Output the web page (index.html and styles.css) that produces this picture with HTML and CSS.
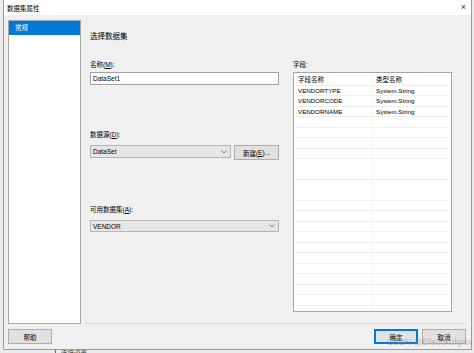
FILE: index.html
```html
<!DOCTYPE html>
<html lang="zh-CN">
<head>
    <meta charset="UTF-8">
    <title>数据集属性</title>
    <link rel="stylesheet" href="styles.css">
</head>
<body>
    <div class="window">
        <!-- Title bar -->
        <div class="titlebar">
            <span class="title">数据集属性</span>
            <span class="close">×</span>
        </div>

        <div class="content">
            <!-- Page list -->
            <div class="nav">
                <div class="nav-item selected">常规</div>
            </div>

            <!-- General page -->
            <div class="main">
                <div class="heading">选择数据集</div>
                <div class="columns">
                    <div class="left-col">
                        <div class="label">名称(<u>M</u>):</div>
                        <div class="textbox">DataSet1</div>

                        <div class="label gap">数据源(<u>D</u>):</div>
                        <div class="row">
                            <div class="combo short">
                                <span>DataSet</span>
                                <svg class="chevron" width="6" height="4" viewBox="0 0 6 4"><polyline points="0.5,0.5 3,3 5.5,0.5" fill="none" stroke="#606060" stroke-width="0.8"/></svg>
                            </div>
                            <div class="btn new">新建(<u>E</u>)...</div>
                        </div>

                        <div class="label gap">可用数据集(<u>A</u>):</div>
                        <div class="combo">
                            <span>VENDOR</span>
                            <svg class="chevron" width="6" height="4" viewBox="0 0 6 4"><polyline points="0.5,0.5 3,3 5.5,0.5" fill="none" stroke="#606060" stroke-width="0.8"/></svg>
                        </div>
                    </div>

                    <div class="right-col">
                        <div class="label">字段:</div>
                        <div class="listview">
                            <div class="lv-row lv-head">
                                <span class="c1">字段名称</span>
                                <span class="c2">类型名称</span>
                            </div>
                            <div class="lv-row">
                                <span class="c1">VENDORTYPE</span>
                                <span class="c2">System.String</span>
                            </div>
                            <div class="lv-row">
                                <span class="c1">VENDORCODE</span>
                                <span class="c2">System.String</span>
                            </div>
                            <div class="lv-row">
                                <span class="c1">VENDORNAME</span>
                                <span class="c2">System.String</span>
                            </div>
                            <div class="lv-fill"></div>
                        </div>
                    </div>
                </div>
            </div>
        </div>

        <!-- Dialog buttons -->
        <div class="footer">
            <div class="btn">帮助</div>
            <span class="spacer"></span>
            <div class="btn default">确定</div>
            <div class="btn">取消</div>
        </div>
    </div>

    <div class="backdrop"><span>连接设置</span></div>

    <div class="watermark">CSDN @Elisuukufgnix</div>
</body>
</html>
```

FILE: styles.css
```css
* {
    margin: 0;
    padding: 0;
    box-sizing: border-box;
}

body {
    width: 474px;
    height: 353px;
    overflow: hidden;
    position: relative;
    background: #ececec;
    font-family: "Liberation Sans", "Noto Sans CJK SC", sans-serif;
    font-size: 6.5px;
    color: #000;
}

u {
    text-decoration: underline;
}

.window {
    width: 469px;
    height: 350px;
    margin-left: 3px;
    background: #f0f0f0;
    border: 1px solid #9b9b9b;
    border-top: none;
}

.titlebar {
    height: 15px;
    background: #fff;
    display: flex;
    align-items: center;
    justify-content: space-between;
    padding: 0 5px 0 3px;
}

.title {
    font-size: 6.5px;
}

.close {
    font-size: 9px;
    color: #333;
    line-height: 15px;
}

.content {
    display: flex;
    height: 309px;
    padding: 5px 5px 0 4px;
}

.nav {
    width: 73px;
    height: 304px;
    margin-right: 4px;
    background: #fff;
    border: 1px solid #a7a7a7;
}

.nav-item {
    height: 14px;
    line-height: 14px;
    padding-left: 6px;
}

.nav-item.selected {
    background: #0078d7;
    color: #fff;
}

.main {
    flex: 1;
    height: 304px;
    padding-left: 5px;
    border-bottom: 1px solid #d6d6d6;
}

.heading {
    padding-top: 12px;
    font-size: 7.5px;
    line-height: 10px;
}

.columns {
    display: flex;
    gap: 14px;
    margin-top: 19px;
}

.left-col {
    width: 189px;
}

.right-col {
    width: 159px;
}

.label {
    height: 8px;
    line-height: 8px;
    margin-bottom: 3px;
}

.label.gap {
    margin-top: 46px;
    margin-bottom: 6px;
}

.textbox {
    height: 13px;
    line-height: 11px;
    padding-left: 2px;
    background: #fff;
    border: 1px solid #a3a3a3;
}

.row {
    display: flex;
    align-items: flex-start;
    gap: 3px;
}

.combo {
    height: 12px;
    display: flex;
    align-items: center;
    justify-content: space-between;
    padding: 0 3px 0 2px;
    background: #e6e6e6;
    border: 1px solid #b4b4b4;
}

.combo.short {
    width: 141px;
    height: 13px;
}

.btn {
    width: 44px;
    height: 15px;
    display: flex;
    align-items: center;
    justify-content: center;
    background: #e1e1e1;
    border: 1px solid #adadad;
}

.btn.new {
    width: 45px;
}

.btn.default {
    border: 1px solid #0078d7;
    box-shadow: inset 0 0 0 1px #0078d7;
    margin-right: 4px;
}

.listview {
    height: 240px;
    padding: 0 3px 0 2px;
    background: #fff;
    border: 1px solid #a7a7a7;
    overflow: hidden;
    font-size: 6.2px;
    display: flex;
    flex-direction: column;
}

.lv-row {
    display: flex;
    align-items: center;
    height: 10.5px;
    border-bottom: 1px solid #efefef;
}

.lv-head {
    height: 12.5px;
    font-size: 6.5px;
}

.c1 {
    width: 77px;
    padding-left: 2px;
    align-self: stretch;
    display: flex;
    align-items: center;
    border-right: 1px solid #f6f6f6;
}

.c2 {
    padding-left: 3px;
}

.lv-fill {
    flex: 1;
    background:
        linear-gradient(to right, transparent 76px, #f6f6f6 76px, #f6f6f6 77px, transparent 77px),
        repeating-linear-gradient(to bottom, transparent 0, transparent 9.5px, #efefef 9.5px, #efefef 10.5px);
}

.footer {
    display: flex;
    height: 25px;
    padding: 5px 5px 0 4px;
}

.spacer {
    flex: 1;
}

.backdrop {
    height: 3px;
    margin-left: 55px;
    width: 330px;
    border-left: 1px solid #6b6b6b;
    overflow: hidden;
    font-size: 6.5px;
    line-height: 8px;
    padding-left: 5px;
    color: #333;
}

.watermark {
    position: absolute;
    left: 387px;
    top: 337px;
    font-size: 8.5px;
    color: rgba(140, 145, 155, 0.6);
    white-space: nowrap;
}
```
